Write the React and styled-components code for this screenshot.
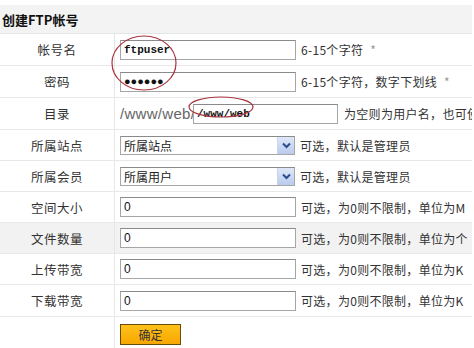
import React from 'react'
import styled, { createGlobalStyle } from 'styled-components';

const GlobalStyle = createGlobalStyle`
  html, body {
    margin: 0;
    padding: 0;
    background: #fff;
    overflow: hidden;
  }
  body {
    font-family: "Noto Sans CJK SC", "Liberation Sans", sans-serif;
    font-size: 12px;
    color: #333;
  }
`;

const rows = [
  { label: '帐号名', kind: 'text', value: 'ftpuser', note: '6-15个字符', star: true, h: 32 },
  { label: '密码', kind: 'password', value: '●●●●●●', note: '6-15个字符，数字下划线', star: true, h: 32 },
  { label: '目录', kind: 'dir', value: '/www/web', note: '为空则为用户名，也可使', h: 32 },
  { label: '所属站点', kind: 'select', value: '所属站点', note: '可选，默认是管理员', h: 31 },
  { label: '所属会员', kind: 'select', value: '所属用户', note: '可选，默认是管理员', h: 31 },
  { label: '空间大小', kind: 'num', value: '0', note: '可选，为0则不限制，单位为M', h: 31 },
  { label: '文件数量', kind: 'num', value: '0', note: '可选，为0则不限制，单位为个', h: 31, hl: true },
  { label: '上传带宽', kind: 'num', value: '0', note: '可选，为0则不限制，单位为K', h: 31 },
  { label: '下载带宽', kind: 'num', value: '0', note: '可选，为0则不限制，单位为K', h: 32 },
];

function Field({ row }) {
  if (row.kind === 'select') {
    return (
      <SelectBox>
        <span>{row.value}</span>
        <ArrowBtn>
          <svg width="9" height="7" viewBox="0 0 9 7">
            <path d="M1 1.5 L4.5 5 L8 1.5" fill="none" stroke="#2b4d8c" strokeWidth="2" />
          </svg>
        </ArrowBtn>
      </SelectBox>
    );
  }
  if (row.kind === 'dir') {
    return (
      <>
        <DirPrefix>/www/web/</DirPrefix>
        <TextBox $w={145} $mono>{row.value}</TextBox>
      </>
    );
  }
  return (
    <TextBox $mono={row.kind !== 'num'} $dots={row.kind === 'password'}>
      {row.value}
    </TextBox>
  );
}

function App() {
  return (
    <Page>
      <GlobalStyle />
      <Header>创建FTP帐号</Header>
      {rows.map((row) => (
        <Row key={row.label} $h={row.h} $hl={row.hl}>
          <Label>{row.label}</Label>
          <Cell>
            <Field row={row} />
            <Note $wide={row.kind === 'dir'}>
              {row.note}
              {row.star && <Star>*</Star>}
            </Note>
          </Cell>
        </Row>
      ))}
      <Row $h={31} $last>
        <Label />
        <Cell>
          <SubmitBtn>确定</SubmitBtn>
        </Cell>
      </Row>

      <Marks width="474" height="348" viewBox="0 0 474 348">
        <ellipse cx="144" cy="63" rx="32" ry="27" fill="none" stroke="#a8353d" strokeWidth="1.2" />
        <ellipse cx="221" cy="107" rx="32" ry="10" fill="none" stroke="#a8353d" strokeWidth="1.2" />
      </Marks>
    </Page>
  );
}

const Page = styled.div`
  position: relative;
  width: 474px;
  height: 348px;
  padding-top: 5px;
  box-sizing: border-box;
  overflow: hidden;
`;

const Header = styled.div`
  width: 472px;
  height: 29px;
  background: #f3f3f3;
  border-bottom: 1px solid #e6e6e6;
  box-sizing: border-box;
  padding-left: 2px;
  display: flex;
  align-items: center;
  font-size: 13px;
  font-weight: 700;
  color: #111;
`;

const Row = styled.div`
  display: flex;
  width: 472px;
  height: ${(p) => p.$h}px;
  box-sizing: border-box;
  border-bottom: ${(p) => (p.$last ? 'none' : '1px solid #e8e8e8')};
  background: ${(p) => (p.$hl ? '#f2f2f2' : '#fff')};
`;

const Label = styled.div`
  width: 114px;
  flex-shrink: 0;
  border-right: 1px solid #e6e6e6;
  display: flex;
  align-items: center;
  justify-content: center;
  font-size: 12.5px;
  letter-spacing: 0.5px;
  color: #333;
`;

const Cell = styled.div`
  flex: 1;
  min-width: 0;
  display: flex;
  align-items: center;
  padding-left: 5px;
  white-space: nowrap;
`;

const TextBox = styled.div`
  width: ${(p) => p.$w || 176}px;
  height: 20px;
  flex-shrink: 0;
  box-sizing: border-box;
  border: 1px solid #a6a6a6;
  border-top-color: #8a8a8a;
  background: #fff;
  display: flex;
  align-items: center;
  padding-left: 3px;
  font-family: ${(p) => (p.$mono ? '"Liberation Mono", "DejaVu Sans Mono", monospace' : '"Liberation Sans", sans-serif')};
  font-size: ${(p) => (p.$dots ? '11px' : p.$mono ? '11px' : '12px')};
  font-weight: ${(p) => (p.$mono ? 700 : 400)};
  letter-spacing: 0;
  color: #111;
`;

const DirPrefix = styled.span`
  font-family: "Liberation Sans", sans-serif;
  font-size: 15px;
  color: #666;
  width: 73px;
  flex-shrink: 0;
  letter-spacing: 0.3px;
`;

const SelectBox = styled.div`
  width: 175px;
  height: 19px;
  flex-shrink: 0;
  box-sizing: border-box;
  border: 1px solid #a6a6a6;
  border-top-color: #8a8a8a;
  background: #fff;
  display: flex;
  align-items: center;
  justify-content: space-between;
  padding-left: 3px;
  font-size: 12px;
  color: #222;
`;

const ArrowBtn = styled.span`
  width: 16px;
  height: 17px;
  background: linear-gradient(#dfe8f8, #b9cbee);
  border-left: 1px solid #c9d5ec;
  display: flex;
  align-items: center;
  justify-content: center;
`;

const Note = styled.span`
  margin-left: ${(p) => (p.$wide ? '6px' : '5px')};
  font-size: 12px;
  letter-spacing: 0.3px;
  color: #333;
  overflow: hidden;
`;

const Star = styled.span`
  margin-left: 7px;
  color: #999;
`;

const SubmitBtn = styled.button`
  width: 61px;
  height: 21px;
  margin-top: 3px;
  border: 1px solid #6a4a08;
  background: linear-gradient(#ffc21a, #f7a600);
  font-family: "Noto Sans CJK SC", sans-serif;
  font-size: 12px;
  color: #333;
  padding: 0;
`;

const Marks = styled.svg`
  position: absolute;
  left: 0;
  top: 0;
  pointer-events: none;
`;

export default App;
